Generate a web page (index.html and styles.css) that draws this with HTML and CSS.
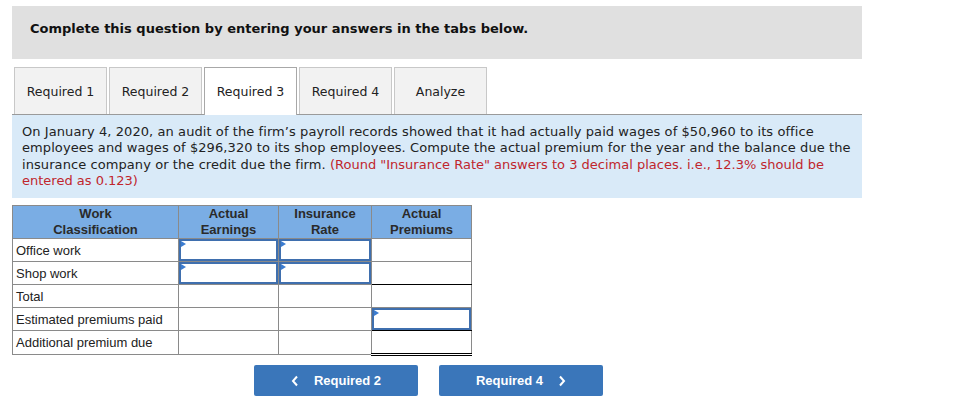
FILE: index.html
```html
<!DOCTYPE html>
<html>
<head>
<meta charset="utf-8">
<link rel="stylesheet" href="styles.css">
</head>
<body>
<div class="page">
  <div class="banner">Complete this question by entering your answers in the tabs below.</div>
  <div class="tabs">
    <div class="tab">Required 1</div>
    <div class="tab">Required 2</div>
    <div class="tab active">Required 3</div>
    <div class="tab">Required 4</div>
    <div class="tab">Analyze</div>
  </div>
  <div class="prompt">On January 4, 2020, an audit of the firm’s payroll records showed that it had actually paid wages of $50,960 to its office employees and wages of $296,320 to its shop employees. Compute the actual premium for the year and the balance due the insurance company or the credit due the firm. <span class="red">(Round "Insurance Rate" answers to 3 decimal places. i.e., 12.3% should be entered as 0.123)</span></div>
  <table class="grid">
    <colgroup>
      <col class="c1"><col class="c2"><col class="c3"><col class="c4">
    </colgroup>
    <thead>
      <tr><th>Work<br>Classification</th><th>Actual<br>Earnings</th><th>Insurance<br>Rate</th><th>Actual<br>Premiums</th></tr>
    </thead>
    <tbody>
      <tr><td class="label">Office work</td><td class="in"><div class="box"><span class="tri"></span></div></td><td class="in"><div class="box"><span class="tri"></span></div></td><td></td></tr>
      <tr><td class="label">Shop work</td><td class="in"><div class="box"><span class="tri"></span></div></td><td class="in"><div class="box"><span class="tri"></span></div></td><td class="under"></td></tr>
      <tr><td class="label">Total</td><td></td><td></td><td></td></tr>
      <tr><td class="label">Estimated premiums paid</td><td></td><td></td><td class="in under"><div class="box"><span class="tri"></span></div></td></tr>
      <tr><td class="label">Additional premium due</td><td></td><td></td><td class="double"></td></tr>
    </tbody>
  </table>
  <div class="nav">
    <div class="btn"><svg class="chev" width="8" height="12" viewBox="0 0 8 12"><polyline points="6,1.5 2,6 6,10.5" fill="none" stroke="#fff" stroke-width="2"/></svg><span>Required 2</span></div>
    <div class="btn"><span>Required 4</span><svg class="chev" width="8" height="12" viewBox="0 0 8 12"><polyline points="2,1.5 6,6 2,10.5" fill="none" stroke="#fff" stroke-width="2"/></svg></div>
  </div>
</div>
</body>
</html>
```
FILE: styles.css
```css
html, body { margin: 0; padding: 0; background: #fff; }
.page { padding: 6px 0 0 12px; width: 850px; font-family: "DejaVu Sans", Verdana, sans-serif; color: #222; }
.banner {
  background: #e0e0e0;
  height: 53px;
  box-sizing: border-box;
  padding: 15px 0 0 18px;
  font-weight: bold;
  font-size: 13px;
  line-height: 16px;
  color: #111;
}
.tabs {
  margin-top: 8px;
  display: flex;
  gap: 2px;
  padding-left: 2px;
  border-bottom: 1px solid #9a9a9a;
  height: 47px;
}
.tab {
  flex: none;
  width: 93px;
  height: 47px;
  box-sizing: border-box;
  border: 1px solid #c8c8c8;
  border-bottom: none;
  background: #f2f2f2;
  font-size: 12.5px;
  display: flex;
  align-items: center;
  justify-content: center;
  color: #222;
}
.tab.active {
  background: #fff;
  border-color: #a8a8a8;
  height: 48px;
  margin-bottom: -1px;
}
.prompt {
  background: #d9eaf8;
  padding: 9px 2px 9px 10px;
  height: 83px;
  box-sizing: border-box;
  font-size: 13px;
  letter-spacing: 0.08px;
  line-height: 16.3px;
  color: #222;
}
.red { color: #c0262d; letter-spacing: 0; }
.grid {
  margin-top: 7px;
  border-collapse: collapse;
  table-layout: fixed;
  width: 459px;
  font-family: "Liberation Sans", Arial, sans-serif;
  font-size: 13px;
}
.c1 { width: 166px; }
.c2 { width: 100px; }
.c3 { width: 93px; }
.c4 { width: 100px; }
.grid th {
  background: #7aade4;
  border: 1px solid #8a8a8a;
  font-weight: bold;
  color: #2a2a2a;
  height: 32px;
  padding: 0;
  line-height: 16px;
  vertical-align: middle;
}
.grid td {
  border: 1px solid #8a8a8a;
  height: 22px;
  padding: 0;
  color: #222;
}
.grid td.label { padding-left: 3px; }
.grid td.in { padding: 0; }
.box {
  height: 22px;
  box-sizing: border-box;
  border: 2px solid #3f6fae;
  position: relative;
}
.tri {
  position: absolute;
  left: 0;
  top: 0;
  width: 0;
  height: 0;
  border-top: 3.5px solid transparent;
  border-bottom: 3.5px solid transparent;
  border-left: 5px solid #3b7cd0;
}
.grid td.under { border-bottom: 1px solid #000; }
.grid td.double { border-bottom: 3px double #000; }
.nav {
  display: flex;
  gap: 21px;
  margin: 9px 0 0 242px;
}
.btn {
  width: 164px;
  height: 31px;
  background: #3a76ba;
  border-radius: 2px;
  color: #fff;
  font-family: "Liberation Sans", Arial, sans-serif;
  font-weight: bold;
  font-size: 13px;
  display: flex;
  align-items: center;
  justify-content: center;
  gap: 15px;
}
.chev { display: block; }
```
